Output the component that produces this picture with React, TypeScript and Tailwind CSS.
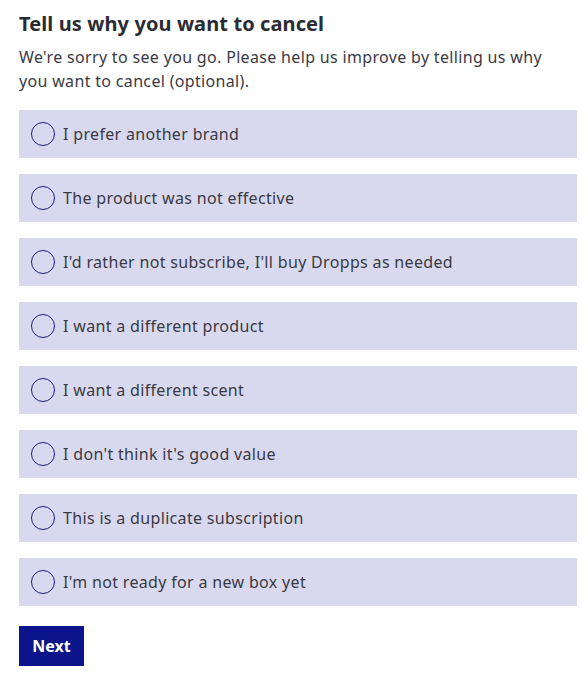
import React, { useState } from "react";

const reasons = [
  "I prefer another brand",
  "The product was not effective",
  "I'd rather not subscribe, I'll buy Dropps as needed",
  "I want a different product",
  "I want a different scent",
  "I don't think it's good value",
  "This is a duplicate subscription",
  "I'm not ready for a new box yet",
];

export default function App() {
  const [sel, setSel] = useState<number | null>(null);
  return (
    <div className="bg-white min-h-[679px] px-[19px] pt-[10px] text-[#3a3a44]" style={{ fontFamily: '"Noto Sans", sans-serif' }}>
      <h1 className="text-[20px] leading-[28px] font-bold text-[#2b2b33] tracking-[0.1px]">Tell us why you want to cancel</h1>
      <p className="mt-[7px] text-[16px] leading-[24px] pr-[20px] tracking-[0.33px]">
        We're sorry to see you go. Please help us improve by telling us why you want to cancel (optional).
      </p>
      <div className="mt-[17px] flex flex-col gap-[16px] w-[558px]">
        {reasons.map((r, i) => (
          <label key={i} className="flex items-center h-[48px] bg-[#d8d9ee] pl-[12px] cursor-pointer" onClick={() => setSel(i)}>
            <span className="w-[24px] h-[24px] rounded-full border-[1.5px] border-[#1a1a7e] flex items-center justify-center shrink-0">
              {sel === i && <span className="w-[12px] h-[12px] rounded-full bg-[#1a1a7e]" />}
            </span>
            <span className="ml-[8px] text-[16px] tracking-[0.33px]">{r}</span>
          </label>
        ))}
      </div>
      <button className="mt-[20px] h-[40px] w-[65px] bg-[#0b148a] text-white font-bold text-[16px]">Next</button>
    </div>
  );
}
